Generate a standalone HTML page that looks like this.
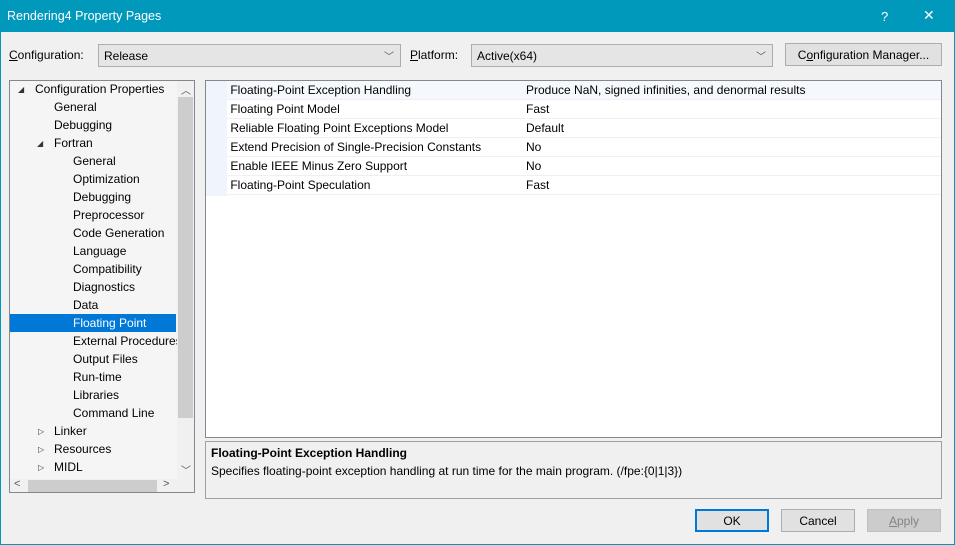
<!DOCTYPE html>
<html><head><style>
*{box-sizing:border-box;margin:0;padding:0}
body{width:955px;height:545px;background:#f0f0f0;font-family:"Liberation Sans",sans-serif;font-size:12px;color:#000;position:relative;overflow:hidden}
.a{position:absolute}
.title{left:0;top:0;width:955px;height:32px;background:#0099bc;color:#fff;font-size:12.5px}
.frame{left:0;top:0;width:955px;height:545px;border:1px solid #0099bc;border-top:none}
.combo{background:#e5e5e5;border:1px solid #adadad;height:23px;padding:4px 5px;white-space:nowrap}
.btn{background:#e1e1e1;border:1px solid #adadad;height:23px;text-align:center;padding-top:4px}
.tree{left:9px;top:80px;width:186px;height:413px;border:1px solid #828790;background:#f5f5f5}
.ti{position:absolute;height:18px;line-height:16px;white-space:nowrap}
.grid{left:205px;top:80px;width:737px;height:358px;border:1px solid #828790;background:#fff}
.row{position:absolute;left:21px;width:714px;height:19px;line-height:18px;border-bottom:1px solid #f0f0f0}
.row span{position:absolute;left:299px}
.tri{position:absolute;font-size:8px;color:#333}
</style></head><body>
<div class="a title"><div class="a" style="left:7px;top:9px">Rendering4 Property Pages</div><div class="a" style="left:881px;top:9px;font-size:13px">?</div><div class="a" style="left:923px;top:7px;font-size:14px">✕</div></div>
<div class="a frame"></div>
<div class="a" style="left:9px;top:48px"><u>C</u>onfiguration:</div>
<div class="a combo" style="left:98px;top:44px;width:303px">Release<span class="a" style="right:6px;top:3px;font-size:10px;color:#555">﹀</span></div>
<div class="a" style="left:410px;top:48px"><u>P</u>latform:</div>
<div class="a combo" style="left:471px;top:44px;width:302px">Active(x64)<span class="a" style="right:6px;top:3px;font-size:10px;color:#555">﹀</span></div>
<div class="a btn" style="left:785px;top:43px;width:157px">C<u>o</u>nfiguration Manager...</div>

<div class="a tree">
<div class="a" style="left:0;top:233px;width:166px;height:18px;background:#0078d7"></div>
<div class="tri" style="left:8px;top:4px">◢</div><div class="ti" style="left:25px;top:0">Configuration Properties</div>
<div class="ti" style="left:44px;top:18px">General</div>
<div class="ti" style="left:44px;top:36px">Debugging</div>
<div class="tri" style="left:27px;top:58px">◢</div><div class="ti" style="left:44px;top:54px">Fortran</div>
<div class="ti" style="left:63px;top:72px">General</div>
<div class="ti" style="left:63px;top:90px">Optimization</div>
<div class="ti" style="left:63px;top:108px">Debugging</div>
<div class="ti" style="left:63px;top:126px">Preprocessor</div>
<div class="ti" style="left:63px;top:144px">Code Generation</div>
<div class="ti" style="left:63px;top:162px">Language</div>
<div class="ti" style="left:63px;top:180px">Compatibility</div>
<div class="ti" style="left:63px;top:198px">Diagnostics</div>
<div class="ti" style="left:63px;top:216px">Data</div>
<div class="ti" style="left:63px;top:234px;color:#fff">Floating Point</div>
<div class="ti" style="left:63px;top:252px">External Procedures</div>
<div class="ti" style="left:63px;top:270px">Output Files</div>
<div class="ti" style="left:63px;top:288px">Run-time</div>
<div class="ti" style="left:63px;top:306px">Libraries</div>
<div class="ti" style="left:63px;top:324px">Command Line</div>
<div class="tri" style="left:28px;top:346px">▷</div><div class="ti" style="left:44px;top:342px">Linker</div>
<div class="tri" style="left:28px;top:364px">▷</div><div class="ti" style="left:44px;top:360px">Resources</div>
<div class="tri" style="left:28px;top:382px">▷</div><div class="ti" style="left:44px;top:378px">MIDL</div>
<div class="a" style="left:167px;top:0;width:17px;height:398px;background:#f0f0f0"></div>
<div class="a" style="left:168px;top:16px;width:15px;height:321px;background:#cdcdcd"></div>
<div class="a" style="left:171px;top:1px;font-size:10px;color:#555">︿</div>
<div class="a" style="left:171px;top:381px;font-size:10px;color:#555">﹀</div>
<div class="a" style="left:0;top:398px;width:184px;height:13px;background:#f0f0f0"></div>
<div class="a" style="left:18px;top:399px;width:129px;height:12px;background:#cdcdcd"></div>
<div class="a" style="left:4px;top:397px;font-size:11px;color:#555">&lt;</div>
<div class="a" style="left:153px;top:397px;font-size:11px;color:#555">&gt;</div>
</div>

<div class="a grid">
<div class="a" style="left:0;top:0;width:21px;height:115px;background:#f0f4fb"></div>
<div class="row" style="top:0;background:#f5f8fc">&nbsp;Floating-Point Exception Handling<span>Produce NaN, signed infinities, and denormal results</span></div>
<div class="row" style="top:19px">&nbsp;Floating Point Model<span>Fast</span></div>
<div class="row" style="top:38px">&nbsp;Reliable Floating Point Exceptions Model<span>Default</span></div>
<div class="row" style="top:57px">&nbsp;Extend Precision of Single-Precision Constants<span>No</span></div>
<div class="row" style="top:76px">&nbsp;Enable IEEE Minus Zero Support<span>No</span></div>
<div class="row" style="top:95px">&nbsp;Floating-Point Speculation<span>Fast</span></div>
</div>

<div class="a" style="left:205px;top:441px;width:737px;height:58px;border:1px solid #a0a0a0;background:#f0f0f0">
<div class="a" style="left:5px;top:4px;font-weight:bold">Floating-Point Exception Handling</div>
<div class="a" style="left:5px;top:22px;white-space:nowrap">Specifies floating-point exception handling at run time for the main program. (/fpe:{0|1|3})</div>
</div>

<div class="a btn" style="left:695px;top:509px;width:74px;border:2px solid #0078d7;padding-top:3px">OK</div>
<div class="a btn" style="left:781px;top:509px;width:74px">Cancel</div>
<div class="a btn" style="left:867px;top:509px;width:74px;background:#cccccc;border-color:#bfbfbf;color:#838383"><u>A</u>pply</div>
</body></html>
